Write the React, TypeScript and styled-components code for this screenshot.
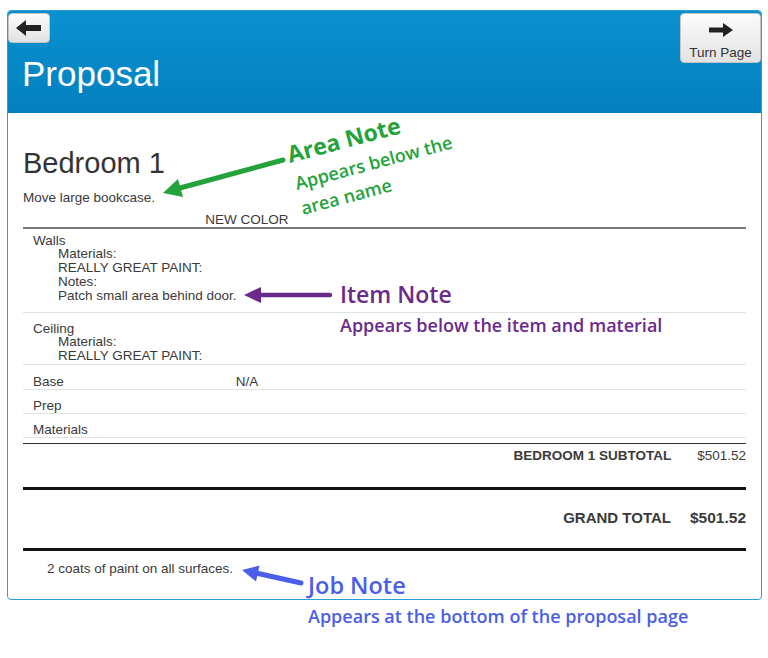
import React from "react";
import styled, { createGlobalStyle } from "styled-components";

const GlobalStyle = createGlobalStyle`
  html, body {
    margin: 0;
    padding: 0;
    background: #fff;
  }
  body {
    font-family: "Liberation Sans", Arial, sans-serif;
    color: #3a3a3a;
  }
`;

const Page = styled.div`
  position: relative;
  width: 768px;
  height: 658px;
  box-sizing: border-box;
  padding: 10px 6px 0 7px;
  overflow: hidden;
`;

const Card = styled.div`
  border: 1px solid #2c9dd6;
  border-radius: 4px;
  overflow: hidden;
  background: #fff;
`;

const Header = styled.header`
  height: 102px;
  box-sizing: border-box;
  padding-top: 2px;
  background: linear-gradient(#0a91cf, #0380c0);
  display: grid;
  grid-template-columns: 1fr auto;
  align-items: start;
`;

const HeaderLeft = styled.div`
  display: flex;
  flex-direction: column;
  align-items: flex-start;
`;

const Title = styled.h1`
  margin: 11px 0 0 14px;
  font-size: 35px;
  line-height: 40px;
  font-weight: normal;
  color: #fff;
`;

const NavButton = styled.button<{ $wide?: boolean }>`
  box-sizing: border-box;
  width: ${(p) => (p.$wide ? "81px" : "42px")};
  height: ${(p) => (p.$wide ? "50px" : "30px")};
  padding: ${(p) => (p.$wide ? "9px 0 0" : "0")};
  border: 1px solid #c4c4c4;
  border-radius: 4px;
  background: linear-gradient(#fbfbfb, #e2e2e2);
  display: flex;
  flex-direction: column;
  align-items: center;
  justify-content: ${(p) => (p.$wide ? "flex-start" : "center")};
  gap: 8px;
  font-family: "Liberation Sans", Arial, sans-serif;
  font-size: 13.5px;
  line-height: 15px;
  color: #333;
  cursor: pointer;
`;

const Body = styled.div`
  padding: 0 15px;
`;

const AreaName = styled.h2`
  margin: 34px 0 0;
  font-size: 29px;
  line-height: 32px;
  font-weight: normal;
  color: #333;
`;

const AreaNote = styled.p`
  margin: 11px 0 0;
  font-size: 13.5px;
  line-height: 15px;
`;

const Row = styled.div<{ $head?: boolean; $top?: string; $bottom?: string }>`
  display: grid;
  grid-template-columns: 167px 114px 1fr;
  padding: ${(p) => p.$top ?? "9.5px"} 0 ${(p) => p.$bottom ?? "0"};
  font-size: 13.5px;
  line-height: 13.7px;
  border-bottom: ${(p) => (p.$head ? "2px solid #777" : "1px solid #e2e2e2")};
`;

const ItemCell = styled.div`
  padding-left: 10px;
  white-space: nowrap;
`;

const ValueCell = styled.div`
  text-align: center;
  white-space: nowrap;
`;

const SubLine = styled.div`
  padding-left: 25px;
`;

const TotalRow = styled.div<{ $grand?: boolean }>`
  display: flex;
  justify-content: flex-end;
  align-items: baseline;
  gap: ${(p) => (p.$grand ? "19px" : "26px")};
  margin-top: ${(p) => (p.$grand ? "0" : "5px")};
  padding: ${(p) => (p.$grand ? "18.5px 0 21.5px" : "5px 0 24.7px")};
  border-top: ${(p) => (p.$grand ? "3px solid #111" : "1px solid #333")};
  font-size: ${(p) => (p.$grand ? "15px" : "13.5px")};
  line-height: ${(p) => (p.$grand ? "18px" : "13.7px")};
`;

const TotalLabel = styled.span`
  font-weight: bold;
`;

const Amount = styled.span<{ $bold?: boolean }>`
  font-weight: ${(p) => (p.$bold ? "bold" : "normal")};
  font-size: ${(p) => (p.$bold ? "15.5px" : "inherit")};
`;

const JobNote = styled.p`
  margin: 0;
  padding: 9.7px 0 23px 24px;
  border-top: 3px solid #111;
  font-size: 13.5px;
  line-height: 15px;
`;

/* callouts drawn over the sheet */
const Arrows = styled.svg`
  position: absolute;
  left: 0;
  top: 0;
  pointer-events: none;
`;

const Callout = styled.span<{
  $color: string;
  $size: number;
  $weight?: number;
  $x: number;
  $y: number;
  $angle?: number;
}>`
  position: absolute;
  left: ${(p) => p.$x}px;
  top: ${(p) => p.$y}px;
  font-family: "Open Sans", "Noto Sans", sans-serif;
  font-size: ${(p) => p.$size}px;
  font-weight: ${(p) => p.$weight ?? 600};
  line-height: 1;
  color: ${(p) => p.$color};
  white-space: nowrap;
  transform-origin: 0 90%;
  transform: rotate(${(p) => p.$angle ?? 0}deg);
`;

const GREEN = "#24a23b";
const PURPLE = "#6a2a8c";
const BLUE = "#4a5ee9";

const BackArrow = () => (
  <svg width="26" height="16" viewBox="0 0 26 16">
    <path d="M0 8 L10 0 L10 5 L25 5 L25 11 L10 11 L10 16 Z" fill="#222" />
  </svg>
);

const ForwardArrow = () => (
  <svg width="24" height="14" viewBox="0 0 24 14">
    <path d="M24 7 L14 0 L14 4.5 L0 4.5 L0 9.5 L14 9.5 L14 14 Z" fill="#222" />
  </svg>
);

const items = [
  { name: "Walls", lines: ["Materials:", "REALLY GREAT PAINT:", "Notes:", "Patch small area behind door."], top: "5px", bottom: "10px" },
  { name: "Ceiling", lines: ["Materials:", "REALLY GREAT PAINT:"], top: "8.5px", bottom: "1.5px" },
  { name: "Base", value: "N/A" },
  { name: "Prep" },
  { name: "Materials" },
];

export default function App() {
  return (
    <>
      <GlobalStyle />
      <Page>
        <Card>
          <Header>
            <HeaderLeft>
              <NavButton aria-label="Back">
                <BackArrow />
              </NavButton>
              <Title>Proposal</Title>
            </HeaderLeft>
            <NavButton $wide>
              <ForwardArrow />
              <span>Turn Page</span>
            </NavButton>
          </Header>
          <Body>
            <AreaName>Bedroom 1</AreaName>
            <AreaNote>Move large bookcase.</AreaNote>
            <Row $head $top="8px">
              <ItemCell />
              <ValueCell>NEW COLOR</ValueCell>
              <div />
            </Row>
            {items.map((it) => (
              <Row key={it.name} $top={it.top} $bottom={it.bottom}>
                <ItemCell>
                  {it.name}
                  {it.lines?.map((l) => (
                    <SubLine key={l}>{l}</SubLine>
                  ))}
                </ItemCell>
                <ValueCell>{it.value}</ValueCell>
                <div />
              </Row>
            ))}
            <TotalRow>
              <TotalLabel>BEDROOM 1 SUBTOTAL</TotalLabel>
              <Amount>$501.52</Amount>
            </TotalRow>
            <TotalRow $grand>
              <TotalLabel>GRAND TOTAL</TotalLabel>
              <Amount $bold>$501.52</Amount>
            </TotalRow>
            <JobNote>2 coats of paint on all surfaces.</JobNote>
          </Body>
        </Card>

        <Arrows width="768" height="658" viewBox="0 0 768 658">
          <line x1="283" y1="160" x2="180" y2="188" stroke={GREEN} strokeWidth="5" strokeLinecap="round" />
          <polygon points="163,193 183,197 178,179" fill={GREEN} />
          <line x1="330" y1="295" x2="258" y2="295" stroke={PURPLE} strokeWidth="4.5" strokeLinecap="round" />
          <polygon points="244,295 261,287 261,303" fill={PURPLE} />
          <line x1="301" y1="583" x2="256" y2="573" stroke={BLUE} strokeWidth="5" strokeLinecap="round" />
          <polygon points="242,570 259.5,565.5 256,581.5" fill={BLUE} />
        </Arrows>

        <Callout $color={GREEN} $size={23} $weight={700} $x={290} $y={143} $angle={-15}>
          Area Note
        </Callout>
        <Callout $color={GREEN} $size={18} $x={297} $y={174} $angle={-15}>
          Appears below the
        </Callout>
        <Callout $color={GREEN} $size={18} $x={303} $y={199} $angle={-15}>
          area name
        </Callout>

        <Callout $color={PURPLE} $size={23} $x={340} $y={282.5}>
          Item Note
        </Callout>
        <Callout $color={PURPLE} $size={18} $x={340} $y={315.5}>
          Appears below the item and material
        </Callout>

        <Callout $color={BLUE} $size={23.5} $x={308} $y={574}>
          Job Note
        </Callout>
        <Callout $color={BLUE} $size={18} $x={308} $y={606.5}>
          Appears at the bottom of the proposal page
        </Callout>
      </Page>
    </>
  );
}
